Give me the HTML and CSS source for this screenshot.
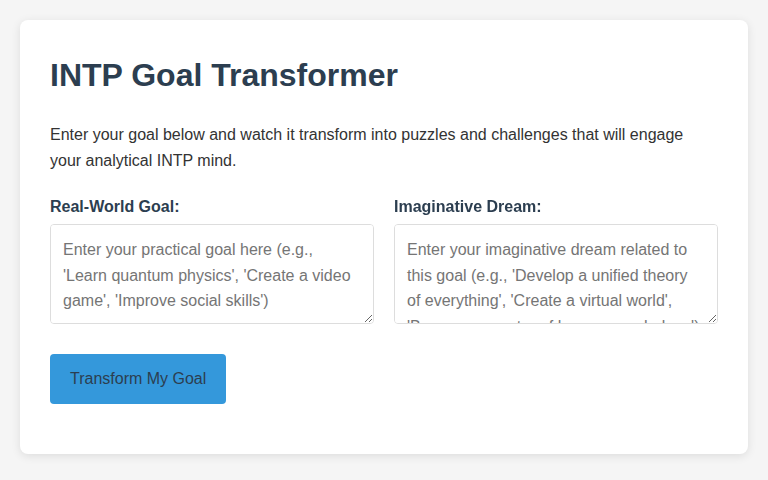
FILE: index.html
```html
<!DOCTYPE html>
<html lang="en">
<head>
<meta charset="utf-8">
<title>INTP Goal Transformer</title>
<link rel="stylesheet" href="styles.css">
</head>
<body>
<main class="card">
  <h1 class="title">INTP Goal Transformer</h1>
  <p class="intro">Enter your goal below and watch it transform into puzzles and challenges that will engage your analytical INTP mind.</p>
  <div class="fields">
    <div class="field">
      <label class="label" for="goal">Real-World Goal:</label>
      <textarea class="input" id="goal" placeholder="Enter your practical goal here (e.g., 'Learn quantum physics', 'Create a video game', 'Improve social skills')"></textarea>
    </div>
    <div class="field">
      <label class="label" for="dream">Imaginative Dream:</label>
      <textarea class="input" id="dream" placeholder="Enter your imaginative dream related to this goal (e.g., 'Develop a unified theory of everything', 'Create a virtual world', 'Become a master of human psychology')"></textarea>
    </div>
  </div>
  <button class="btn" type="button">Transform My Goal</button>
</main>
</body>
</html>
```
FILE: styles.css
```css
* { box-sizing: border-box; }
html, body { margin: 0; }
body {
  background: #f5f5f5;
  font-family: "Liberation Sans", Arial, sans-serif;
  font-size: 16px;
  line-height: 1.6;
  color: #333;
  padding: 20px;
}
.card {
  background: #fff;
  border-radius: 8px;
  box-shadow: 0 2px 10px rgba(0, 0, 0, 0.1);
  padding: 30px 30px 50px;
}
.title {
  margin: 0 0 21px;
  font-size: 32px;
  line-height: 1.6;
  color: #2c3e50;
  font-weight: bold;
}
.intro {
  margin: 0 0 21px;
}
.fields {
  display: flex;
  gap: 20px;
  margin-bottom: 30px;
}
.field {
  flex: 1;
  display: flex;
  flex-direction: column;
}
.label {
  display: block;
  font-weight: bold;
  color: #2c3e50;
  margin-bottom: 4px;
}
.input {
  display: block;
  width: 100%;
  height: 100px;
  padding: 12px;
  border: 1px solid #ddd;
  border-radius: 4px;
  font-family: "Liberation Sans", Arial, sans-serif;
  font-size: 16px;
  line-height: 1.6;
  color: #333;
  resize: vertical;
  margin: 0;
}
.input::placeholder { color: #757575; }
.btn {
  display: block;
  background: #3498db;
  color: #2c3e50;
  border: 0;
  border-radius: 4px;
  padding: 12px 20px;
  height: 50px;
  font-family: "Liberation Sans", Arial, sans-serif;
  font-size: 16px;
  line-height: 1.6;
  cursor: pointer;
}
```
